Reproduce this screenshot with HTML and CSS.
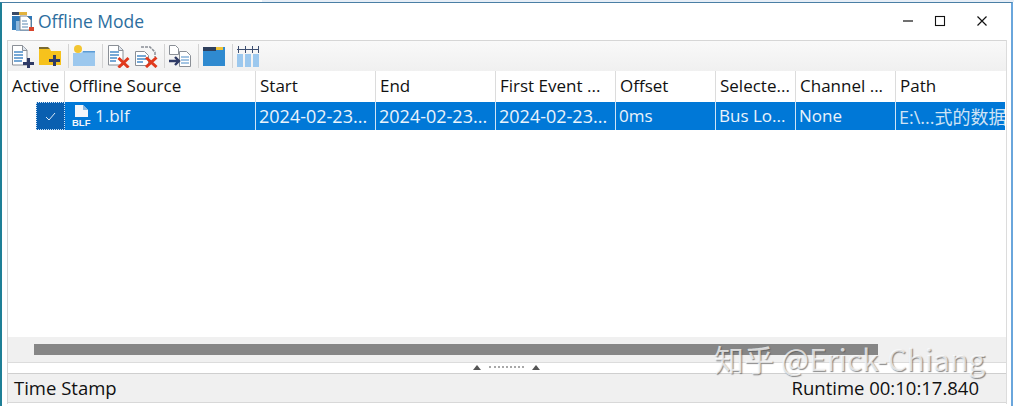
FILE: index.html
```html
<!DOCTYPE html>
<html lang="en">
<head>
<meta charset="utf-8">
<title>Offline Mode</title>
<link rel="stylesheet" href="styles.css">
</head>
<body>
<div class="strip"><span class="strip-tab"></span></div>
<div class="window">
  <header class="titlebar">
    <svg class="app-icon" width="24" height="24" viewBox="0 0 24 24">
      <rect x="1" y="3" width="7" height="3" fill="#3a4a66"/><rect x="8" y="3" width="8" height="3" fill="#e3b23c"/>
      <rect x="1" y="7" width="20" height="14" fill="#2f78b8"/>
      <rect x="5" y="12" width="14" height="10" fill="#8fb8dc"/>
      <path d="M9 7h7l4 4v10H9z" fill="#fff" stroke="#7a8490"/>
      <path d="M11 12h5M11 15h6M11 18h6" stroke="#5b87b0"/>
      <rect x="18" y="18" width="5" height="4" fill="#d8442c"/>
    </svg>
    <span class="title">Offline Mode</span>
    <div class="controls">
      <svg width="14" height="14" viewBox="0 0 14 14"><path d="M2 7h10" stroke="#111" stroke-width="1.2"/></svg>
      <svg class="ctl-max" width="14" height="14" viewBox="0 0 14 14"><rect x="2.5" y="2.5" width="9" height="9" fill="none" stroke="#111" stroke-width="1.1"/></svg>
      <svg width="14" height="14" viewBox="0 0 14 14"><path d="M2.5 2.5l9 9M11.500 2.500l-9 9" stroke="#111" stroke-width="1.2"/></svg>
    </div>
  </header>
  <div class="panel">
    <div class="toolbar">
      <svg class="tb" width="24" height="24" viewBox="0 0 24 24"><path d="M2.500 1.500h10l4.500 4.500v15H2.500z" fill="#fff" stroke="#8a8f96"/><path d="M12.500 1.500v5h4.500" fill="#dfe6ee" stroke="#8a8f96"/><path d="M4 8h9M4 11h9M4 14h9M4 17h8" stroke="#4a8cc8" stroke-width="1.500"/><path d="M13 19.500h11M18.500 14v11" stroke="#2f3b66" stroke-width="3"/></svg>
      <svg class="tb" width="24" height="24" viewBox="0 0 24 24"><path d="M1 3h9l2 2H1z" fill="#7a6a30"/><path d="M1 5h11l1 2h10v14H1z" fill="#f6c21c"/><path d="M11 16.500h11M16.500 11v11" stroke="#2f3b66" stroke-width="3"/></svg>
      <i class="sep"></i>
      <svg class="tb" width="24" height="24" viewBox="0 0 24 24"><circle cx="6" cy="5" r="4" fill="#f2c531"/><path d="M1 9h8l2-2h12v15H1z" fill="#9cc8ee"/><rect x="11" y="7" width="12" height="1.500" fill="#5b9bd5"/></svg>
      <i class="sep"></i>
      <svg class="tb" width="24" height="24" viewBox="0 0 24 24"><path d="M2.500 1.500h10l4.500 4.500v15H2.500z" fill="#fff" stroke="#8a8f96"/><path d="M12.500 1.500v5h4.500" fill="#dfe6ee" stroke="#8a8f96"/><path d="M4 8h9M4 11h9M4 14h7M4 17h6" stroke="#4a8cc8" stroke-width="1.500"/><path d="M12.500 14l10 9.500M22.500 14l-10 9.500" stroke="#e0391c" stroke-width="3"/></svg>
      <svg class="tb" width="24" height="24" viewBox="0 0 24 24"><path d="M7 3h9l5 5v5" fill="none" stroke="#8a8f96" stroke-width="1.500" stroke-dasharray="3 1"/><path d="M1.500 7.500h9l4 4v10h-13z" fill="#fff" stroke="#8a8f96"/><path d="M3 12h9M3 15h9M3 18h6" stroke="#4a8cc8" stroke-width="1.500"/><path d="M12 13.500l10.500 9.500M22.500 13.500l-10.500 9.500" stroke="#e0391c" stroke-width="3"/></svg>
      <i class="sep"></i>
      <svg class="tb" width="24" height="24" viewBox="0 0 24 24"><path d="M1.500 1.500h6l3 3v6h-9z" fill="#fff" stroke="#8a8f96"/><path d="M11.500 7.500h7l4 4v11h-11z" fill="#fff" stroke="#8a8f96"/><path d="M13 13h8M13 16h8M13 19h8" stroke="#4a8cc8"/><path d="M1 17h9M7 13l4 4-4 4" fill="none" stroke="#2f3b66" stroke-width="2.400"/></svg>
      <i class="sep"></i>
      <svg class="tb" width="24" height="24" viewBox="0 0 24 24"><path d="M1 3h22v19H1z" fill="#2f8ad0"/><path d="M1 3h13v4H1z" fill="#2e3f5c"/><path d="M14 3h7v3h-7z" fill="#f0c437"/></svg>
      <i class="sep"></i>
      <svg class="tb" width="24" height="24" viewBox="0 0 24 24"><path d="M1 5.500h22" stroke="#3d4e70"/><path d="M2.500 2v7M9.500 2v7M16.500 2v7M22.500 2v7" stroke="#3d4e70"/><path d="M1 10h6v13H1zM9 10h6v13H9zM17 10h6v13h-6z" fill="#9cc8ee"/></svg>
    </div>
    <div class="table">
      <div class="tr head">
        <div class="cell w-active">Active</div>
        <div class="cell w-source">Offline Source</div>
        <div class="cell w-date">Start</div>
        <div class="cell w-date">End</div>
        <div class="cell w-date">First Event ...</div>
        <div class="cell w-offset">Offset</div>
        <div class="cell w-sel">Selecte...</div>
        <div class="cell w-offset">Channel ...</div>
        <div class="cell w-path">Path</div>
      </div>
      <div class="tr row">
        <div class="w-active checkcell"><span class="check"><svg width="13" height="13" viewBox="0 0 13 13"><path d="M2 7l3 3 6-7" fill="none" stroke="#dbe9f7" stroke-width="1"/></svg></span></div>
        <div class="cell sel w-source file">
          <svg width="19" height="23" viewBox="0 0 19 23"><path d="M3 1h8l5 5v7H3z" fill="#f2f6fb"/><path d="M11 1v5h5" fill="#8db8e0"/><text x="0" y="22" class="blf">BLF</text></svg>
          <span>1.blf</span>
        </div>
        <div class="cell sel w-date big">2024-02-23...</div>
        <div class="cell sel w-date big">2024-02-23...</div>
        <div class="cell sel w-date big">2024-02-23...</div>
        <div class="cell sel w-offset">0ms</div>
        <div class="cell sel w-sel">Bus Lo...</div>
        <div class="cell sel w-offset">None</div>
        <div class="cell sel w-path big path">E:\...式的数据</div>
      </div>
    </div>
    <div class="scroll"><div class="thumb"></div></div>
    <div class="splitter">
      <i class="tri"></i><span class="dots"></span><i class="tri"></i>
    </div>
    <footer class="status"><span>Time Stamp</span><span>Runtime 00:10:17.840</span></footer>
  </div>
</div>
<div class="mark">知乎 @Erick-Chiang</div>
</body>
</html>
```
FILE: styles.css
```css
* { box-sizing: border-box; }
html, body { margin: 0; height: 406px; overflow: hidden; background: #fff; }
body { font-family: "Open Sans", "Noto Sans CJK SC", sans-serif; font-size: 17px; color: #111; position: relative; }
.strip { height: 2px; background: #fff; display: flex; justify-content: flex-end; }
.strip-tab { width: 752px; background: #e6eef7; }
.window { height: 404px; border-top: 1px solid #4a7fa5; border-left: 2px solid #1e7f96; border-right: 2px solid #6aa6dc; padding: 0 4px 0 5px; background: #fff; display: flex; flex-direction: column; margin-right: 1px; }
.titlebar { height: 37px; display: flex; align-items: center; padding: 0 0 2px 4px; flex: none; }
.app-icon { flex: none; }
.title { font-size: 17.500px; color: #2d6e9e; margin-left: 3px; }
.controls { margin-left: auto; display: flex; padding-right: 18px; }
.ctl-max { margin: 0 28px 0 18px; }
.panel { flex: none; height: 364px; display: flex; flex-direction: column; border-left: 1px solid #d4d4d4; border-right: 1px solid #dcdcdc; }
.toolbar { height: 31px; flex: none; display: flex; align-items: center; padding: 0 0 1px 2px; border-top: 1px solid #d6d6d6; background: linear-gradient(#f9f9f9, #f0f0f0); }
.tb { flex: none; }
.tb + .tb { margin-left: 4px; }
.sep { width: 1px; height: 24px; background: #d3d3d3; margin: 0 3px 0 6px; flex: none; }
.table { height: 266px; flex: none; background: #fff; }
.tr { display: flex; }
.head { height: 31px; background: #fff; }
.head .cell { padding-bottom: 2px; }
.row { height: 28px; }
.row .cell { padding-bottom: 1px; padding-left: 3px; }
.cell { padding-left: 4px; white-space: nowrap; overflow: hidden; display: flex; align-items: center; border-right: 1px solid #dcdcdc; flex: none; }
.sel { background: #0078d7; color: #eaf3fb; border-right-color: #cfe4f6; }
.big { font-size: 18px; }
.path { color: #cfe3f5; }
.w-active { width: 57px; flex: none; }
.w-source { width: 191px; }
.w-date { width: 120px; }
.w-offset { width: 100px; }
.w-sel { width: 80px; }
.w-path { width: 109px; border-right: 0; }
.checkcell { display: flex; justify-content: flex-end; align-items: stretch; }
.check { width: 29px; background: #0a5fb0; border: 1px dotted #cfe4f6; display: flex; align-items: center; justify-content: center; }
.row .file { gap: 4px; padding-left: 7px; }
.blf { font-family: "Liberation Sans", sans-serif; font-weight: 700; font-size: 9.500px; fill: #f2f6fb; }
.scroll { height: 26px; flex: none; background: #f0f0f0; border-bottom: 1px solid #dcdcdc; padding: 7px 0 0 26px; }
.thumb { width: 844px; height: 11px; background: #868686; }
.splitter { height: 10px; flex: none; display: flex; align-items: center; justify-content: center; gap: 8px; padding: 0 1px 2px 0; }
.tri { width: 0; height: 0; border: 4px solid transparent; border-top: 0; border-bottom: 5px solid #555; }
.dots { width: 35px; border-top: 2px dotted #a8a8a8; }
.status { height: 30px; flex: none; background: #f0f0f0; border-top: 1px solid #cfcfcf; border-bottom: 1px solid #d8d8d8; display: flex; justify-content: space-between; align-items: center; padding: 0 27px 2px 6px; font-size: 18.500px; }
.mark { position: absolute; left: 714px; top: 339px; font-size: 30px; line-height: 38px; white-space: nowrap; color: rgba(255,255,255,.72); text-shadow: 1px 1px 1px rgba(90,90,90,.7); font-family: "Noto Sans CJK SC", "Open Sans", sans-serif; }
```
